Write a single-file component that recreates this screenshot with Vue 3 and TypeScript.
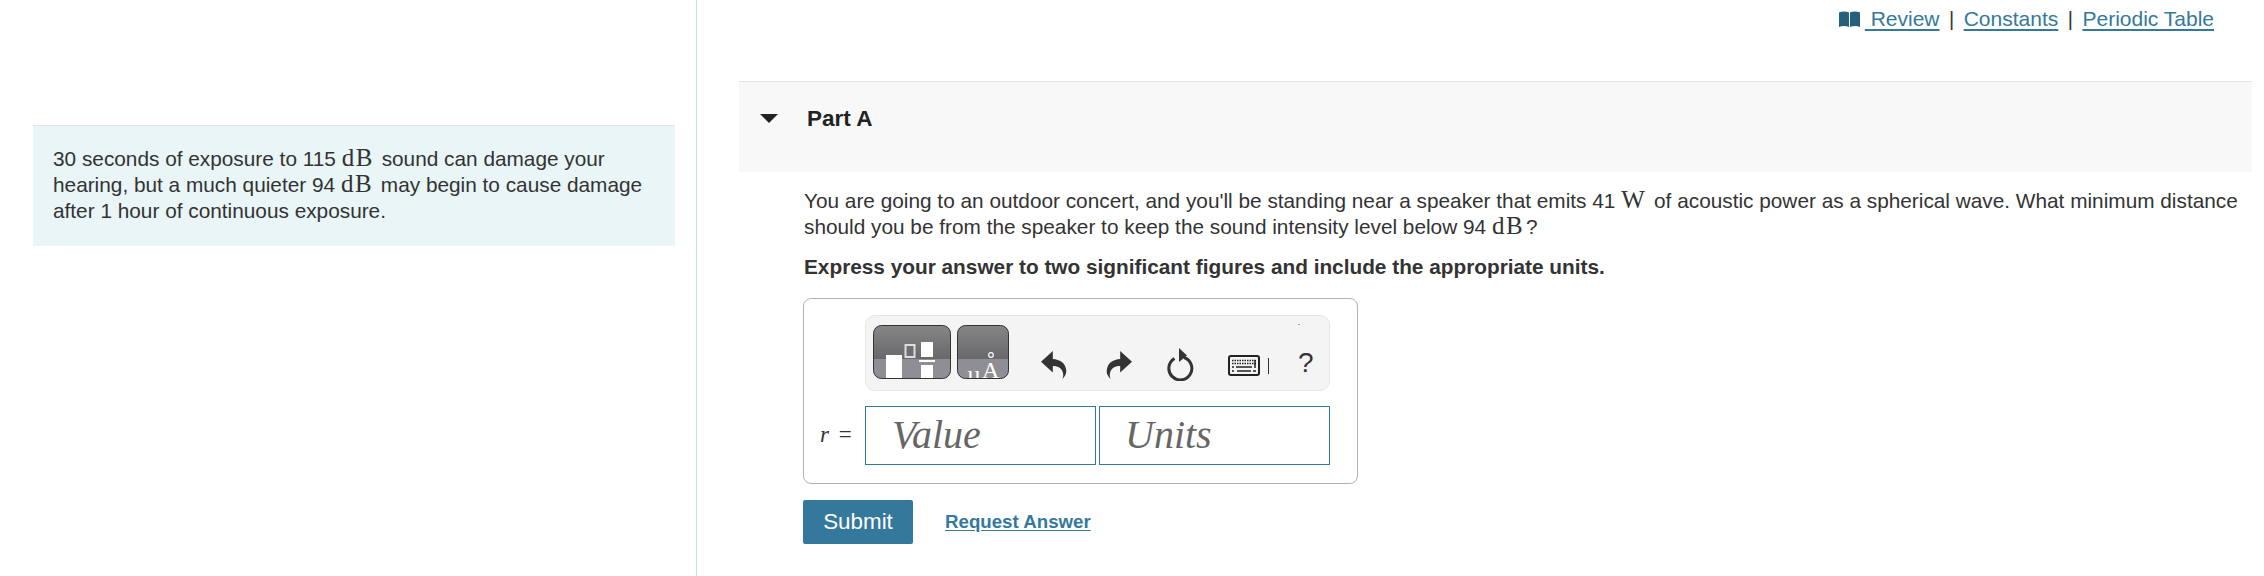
<script setup lang="ts">
const links: string[] = ['Constants', 'Periodic Table']
</script>

<template>
  <div class="page">
    <aside class="left">
      <div class="intro">
        30 seconds of exposure to 115 <span class="m">dB</span> sound can damage your hearing, but a much quieter 94 <span class="m">dB</span> may begin to cause damage after 1 hour of continuous exposure.
      </div>
    </aside>
    <main class="right">
      <nav class="top">
        <svg class="book" width="21" height="16" viewBox="0 0 21 16"><path d="M0 1.500C3 .3 7 .3 10 1.500V16C7 14.800 3 14.800 0 16Z M11 1.500C14 .3 18 .3 21 1.500V16C18 14.800 14 14.800 11 16Z" fill="#24607c"/></svg>
        <a class="lnk">&nbsp;Review</a>
        <span class="sep">|</span>
        <template v-for="(l, i) in links" :key="l">
          <a class="lnk">{{ l }}</a>
          <span v-if="i === 0" class="sep">|</span>
        </template>
      </nav>
      <header class="part">
        <svg class="caret" width="18" height="9" viewBox="0 0 18 9"><path d="M0 0H18L9 9Z" fill="#222"/></svg>
        <h2>Part A</h2>
      </header>
      <section class="body">
        <p class="q">You are going to an outdoor concert, and you'll be standing near a speaker that emits 41 <span class="m">W</span> of acoustic power as a spherical wave. What minimum distance should you be from the speaker to keep the sound intensity level below 94 <span class="m">dB</span>?</p>
        <p class="ins">Express your answer to two significant figures and include the appropriate units.</p>
        <div class="answer">
          <div class="toolbar">
            <svg class="tpl" width="78" height="54" viewBox="0 0 78 54">
              <defs>
                <clipPath id="c1"><rect x=".5" y=".5" width="77" height="53" rx="8"/></clipPath>
                <clipPath id="c2"><rect x=".5" y=".5" width="51" height="53" rx="8"/></clipPath>
                <linearGradient id="g1" x1="0" y1="0" x2="0" y2="1"><stop offset="0" stop-color="#868589"/><stop offset="1" stop-color="#69696b"/></linearGradient>
              </defs>
              <g clip-path="url(#c1)">
                <rect width="78" height="34" fill="url(#g1)"/>
                <rect y="34" width="78" height="20" fill="#8f8e94"/>
                <rect x="13" y="30" width="16" height="24" fill="#fff"/>
                <rect x="32.500" y="20" width="9" height="12" fill="#6f6f71" stroke="#ddd" stroke-width="2"/>
                <rect x="48" y="17" width="12" height="15" fill="#fff"/>
                <rect x="46" y="35" width="16" height="2" fill="#fff"/>
                <rect x="48" y="40" width="12" height="14" fill="#fff"/>
              </g>
              <rect x=".5" y=".5" width="77" height="53" rx="8" fill="none" stroke="#333"/>
            </svg>
            <svg class="tpl2" width="52" height="54" viewBox="0 0 52 54">
              <g clip-path="url(#c2)">
                <rect width="52" height="34" fill="url(#g1)"/>
                <rect y="34" width="52" height="20" fill="#8f8e94"/>
                <text x="10" y="57" class="mu">µ</text>
                <text x="25" y="53" class="ang">A</text>
                <circle cx="34" cy="30" r="2.300" fill="none" stroke="#fff" stroke-width="1.200"/>
              </g>
              <rect x=".5" y=".5" width="51" height="53" rx="8" fill="none" stroke="#333"/>
            </svg>
            <svg class="ic undo" width="26" height="30" viewBox="0 0 22 28" preserveAspectRatio="none"><path d="M10 1 0 11l10 10v-6c5 0 7.500 2.500 8.500 6 .5 2 .5 4-.5 6 3-3 4-6 3-10-1-5-5-8-11-8.500Z" fill="#333"/></svg>
            <svg class="ic redo" width="26" height="30" viewBox="0 0 22 28" preserveAspectRatio="none"><path d="M12 1l10 10-10 10v-6c-5 0-7.500 2.500-8.500 6-.5 2-.5 4 .5 6-3-3-4-6-3-10 1-5 5-8 11-8.500Z" fill="#333"/></svg>
            <svg class="ic reset" width="27" height="33" viewBox="0 0 27 33"><path d="M7.500 10.500A11.500 11.500 0 1 0 17 9.500" fill="none" stroke="#333" stroke-width="3"/><path d="M12 0l8 7.500-8 6.500Z" fill="#333"/></svg>
            <svg class="ic kb" width="32" height="21" viewBox="0 0 32 21">
              <rect x="1" y="1" width="30" height="19" rx="2" fill="#f4f4f4" stroke="#222" stroke-width="2"/>
              <path d="M4 5.500h24M4 8.500h24" stroke="#222" stroke-width="1.500" stroke-dasharray="1.500 1"/>
              <path d="M4 12h2M8 12h16M27 5v8" stroke="#222" stroke-width="1.500"/>
              <path d="M4 16h2M9 16h14M25 16h3" stroke="#222" stroke-width="1.500"/>
            </svg>
            <span class="bar"></span>
            <span class="help">?</span>
            <span class="speck"></span>
          </div>
          <div class="row">
            <span class="lbl"><i>r</i> <span class="eq">=</span></span>
            <div class="field">Value</div>
            <div class="field units">Units</div>
          </div>
        </div>
        <div class="actions">
          <button class="submit">Submit</button>
          <a class="req">Request Answer</a>
        </div>
      </section>
    </main>
  </div>
</template>

<style>
html, body { margin: 0; background: #fff; }
</style>

<style scoped>
.page { display: flex; width: 2264px; height: 576px; overflow: hidden; font-family: "Liberation Sans", Arial, sans-serif; font-size: 20.8px; line-height: 26px; color: #333; }
.left { width: 697px; flex: none; box-sizing: border-box; border-right: 1px solid #c9dde6; padding: 125px 0 0 33px; }
.intro { background: #e9f5f7; border-top: 1px solid #e0e4e6; height: 121px; box-sizing: border-box; padding: 20px 20px 0; width: 642px; }
.m { font-family: "Liberation Serif", serif; font-size: 25px; letter-spacing: 1.500px; line-height: 0; margin-right: 2px; }
.right { flex: 1; min-width: 0; padding: 0 12px 0 42px; }
.top { height: 82px; box-sizing: border-box; display: flex; justify-content: flex-end; align-items: flex-start; padding: 6px 38px 0 0; border-bottom: 1px solid #e3e3e3; }
.book { margin: 5px 5px 0 0; }
.lnk { color: #34799b; text-decoration: underline; text-underline-offset: 3px; font-size: 21px; }
.sep { margin: 0 9.500px; color: #333; font-size: 20px; }
.part { height: 90px; background: #f8f8f8; display: flex; align-items: flex-start; box-sizing: border-box; padding: 32px 0 0 21px; }
.caret { margin-right: 29px; }
h2 { margin: -8px 0 0; font-size: 22.500px; font-weight: 700; line-height: 26px; color: #222; }
.body { padding: 16px 0 0 64px; }
.q { margin: 0 0 0 1px; }
.ins { margin: 14px 0 0 1px; font-weight: 700; }
.answer { margin-top: 18px; width: 555px; height: 186px; box-sizing: border-box; border: 1px solid #b3b3b3; border-radius: 8px; padding: 16px 0 0 61px; }
.toolbar { position: relative; width: 465px; height: 76px; box-sizing: border-box; background: #f4f4f4; border: 1px solid #e6e6e6; border-radius: 10px; display: flex; align-items: flex-start; padding: 9px 0 0 7px; }
.toolbar > * { flex: none; }
.tpl2 { margin-left: 6px; }
.undo { margin: 25px 0 0 32px; }
.redo { margin: 25px 0 0 39px; }
.reset { margin: 23px 0 0 35px; }
.kb { margin: 30px 0 0 34px; }
.bar { width: 1px; height: 16px; background: #333; margin: 33px 0 0 8px; }
.help { margin: 22px 0 0 29px; font-size: 28px; line-height: 32px; }
.speck { position: absolute; right: 29px; top: 8px; width: 2px; height: 1px; background: #aaa; }
.row { display: flex; margin-top: 15px; position: relative; }
.lbl { position: absolute; left: -45px; top: 16px; font-family: "Liberation Serif", serif; font-size: 23px; white-space: nowrap; }
.eq { margin-left: 4px; }
.field { width: 231px; height: 59px; box-sizing: border-box; border: 1px solid #34799b; font-family: "Liberation Serif", serif; font-style: italic; font-size: 40px; line-height: 55px; color: #666; padding-left: 26px; }
.units { margin-left: 3px; padding-left: 25px; }
.actions { display: flex; align-items: center; margin-top: 16px; }
.submit { width: 110px; height: 44px; background: #34799b; color: #fff; border: 0; border-radius: 2px; font: 22.400px "Liberation Sans", sans-serif; padding: 0; }
.req { margin-left: 32px; color: #34799b; font-weight: 700; font-size: 18.700px; text-decoration: underline; text-underline-offset: 2px; }
.mu { font: 24px "Liberation Serif", serif; fill: #fff; }
.ang { font: 24px "Liberation Serif", serif; fill: #fff; }
</style>
